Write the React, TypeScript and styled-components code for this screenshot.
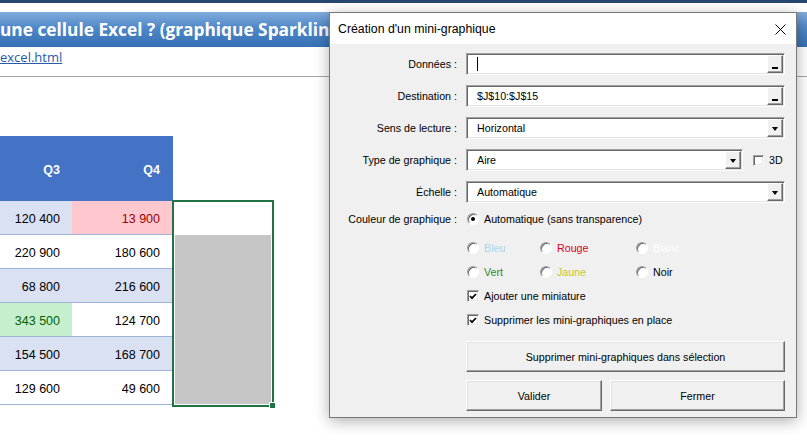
import React from "react";
import styled, { createGlobalStyle } from "styled-components";

const GlobalStyle = createGlobalStyle`
  html, body {
    margin: 0;
    padding: 0;
    background: #fff;
  }
  body {
    font-family: "Liberation Sans", Arial, sans-serif;
  }
`;

const Page = styled.div`
  position: relative;
  width: 807px;
  height: 443px;
  overflow: hidden;
  background: #fff;
`;

const TopStrip = styled.div`
  height: 3px;
  background: #26466d;
  margin-bottom: 9px;
`;

const Banner = styled.div`
  height: 35px;
  background: linear-gradient(to bottom, #82abdc 0%, #4f88c8 45%, #3570b4 100%);
  color: #fff;
  font-family: "Open Sans", sans-serif;
  font-weight: 700;
  font-size: 17.3px;
  line-height: 35px;
  white-space: nowrap;
  overflow: hidden;
`;

const LinkRow = styled.div`
  height: 29px;
`;

const PageLink = styled.a`
  display: inline-block;
  font-family: "Open Sans", sans-serif;
  font-size: 13px;
  line-height: 20px;
  color: #2a5ba8;
  text-decoration: underline;
`;

const Divider = styled.div`
  height: 1px;
  background: #a6a6a6;
`;

const Sheet = styled.div`
  margin-top: 59px;
  display: grid;
  grid-template-columns: 72px 101px 102px;
  grid-template-rows: 65px repeat(6, 34px);
  font-family: "Liberation Sans", Arial, sans-serif;
  font-size: 12.5px;
`;

const HeadCell = styled.div<{ $pad: number }>`
  background: #4472c4;
  color: #fff;
  font-weight: 700;
  display: flex;
  align-items: center;
  justify-content: flex-end;
  padding: 2px ${(p) => p.$pad}px 0 0;
`;

type Tone = "band" | "plain" | "bad" | "good";

const toneBg: Record<Tone, string> = {
  band: "#d9e1f2",
  plain: "#fff",
  bad: "#ffc7ce",
  good: "#c6efce",
};
const toneFg: Record<Tone, string> = {
  band: "#000",
  plain: "#000",
  bad: "#9c0006",
  good: "#006100",
};

const Cell = styled.div<{ $tone: Tone; $pad: number }>`
  box-sizing: border-box;
  background: ${(p) => toneBg[p.$tone]};
  color: ${(p) => toneFg[p.$tone]};
  border-bottom: 1px solid #9fb3d8;
  display: flex;
  align-items: center;
  justify-content: flex-end;
  padding: 3px ${(p) => p.$pad}px 0 0;
`;

const SparkCell = styled.div`
  grid-column: 3;
  grid-row: 2 / span 6;
  align-self: start;
  margin-left: -1px;
  margin-top: -1px;
  box-sizing: border-box;
  width: 102px;
  height: 207px;
  border: 2px solid #217346;
  padding: 1px;
  display: flex;
  flex-direction: column;
  position: relative;
`;

const SparkTop = styled.div`
  height: 32px;
  background: #fff;
`;

const SparkArea = styled.div`
  flex: 1;
  background: #c6c6c6;
`;

const Handle = styled.span`
  position: absolute;
  right: -4px;
  bottom: -4px;
  width: 5px;
  height: 5px;
  background: #217346;
  border: 1px solid #fff;
`;

/* ---------- dialog ---------- */

const Dialog = styled.div`
  position: absolute;
  left: 329px;
  top: 12px;
  width: 468px;
  height: 406px;
  box-sizing: border-box;
  border: 1px solid #777;
  background: #f0f0f0;
  box-shadow: 0 3px 14px rgba(0, 0, 0, 0.32);
  display: flex;
  flex-direction: column;
  font-family: "Liberation Sans", Arial, sans-serif;
  font-size: 10.7px;
  color: #000;
`;

const TitleBar = styled.div`
  height: 30px;
  background: #fff;
  display: flex;
  align-items: center;
  justify-content: space-between;
  padding: 1px 10px 0 8px;
  font-size: 12.3px;
`;

const CloseIcon = styled.svg`
  width: 11px;
  height: 11px;
`;

const Body = styled.div`
  padding: 9px 11px 0 0;
`;

const FormGrid = styled.div`
  display: grid;
  grid-template-columns: 127px 319px;
  grid-auto-rows: 22px;
  column-gap: 9px;
  row-gap: 10px;
`;

const Label = styled.div`
  text-align: right;
  align-self: center;
  white-space: nowrap;
`;

const FieldLine = styled.div`
  display: flex;
  align-items: center;
  gap: 9px;
`;

const Field = styled.div<{ $width?: number }>`
  box-sizing: border-box;
  height: 22px;
  width: ${(p) => (p.$width ? `${p.$width}px` : "100%")};
  background: #fff;
  border: 1px solid;
  border-color: #a0a0a0 #fff #fff #a0a0a0;
  box-shadow: inset 1px 1px #696969, inset -1px -1px #e3e3e3;
  display: flex;
  align-items: center;
  padding-left: 10px;
  white-space: nowrap;
`;

const FieldText = styled.span`
  flex: 1;
  padding-bottom: 1px;
`;

const Caret = styled.span`
  display: inline-block;
  width: 1px;
  height: 14px;
  background: #000;
  vertical-align: middle;
`;

const MiniButton = styled.span`
  box-sizing: border-box;
  width: 16px;
  height: 18px;
  margin-right: 1px;
  background: #f0f0f0;
  border: 1px solid;
  border-color: #fff #696969 #696969 #fff;
  box-shadow: inset -1px -1px #a0a0a0;
  display: flex;
  align-items: center;
  justify-content: center;
`;

const Underscore = styled.span`
  width: 6px;
  height: 2px;
  background: #000;
  margin-top: 8px;
`;

const Arrow = styled.span`
  width: 0;
  height: 0;
  border-left: 3.5px solid transparent;
  border-right: 3.5px solid transparent;
  border-top: 4px solid #000;
  margin-top: 1px;
`;

const Box = styled.span<{ $size: number }>`
  box-sizing: border-box;
  width: ${(p) => p.$size}px;
  height: ${(p) => p.$size}px;
  flex: none;
  background: #fff;
  border: 1px solid;
  border-color: #a0a0a0 #fff #fff #a0a0a0;
  box-shadow: inset 1px 1px #696969, inset -1px -1px #e3e3e3;
  display: flex;
  align-items: center;
  justify-content: center;
`;

const Round = styled.span`
  box-sizing: border-box;
  width: 12px;
  height: 12px;
  flex: none;
  border-radius: 50%;
  background: #fff;
  border: 1px solid;
  border-color: #a0a0a0 #fff #fff #a0a0a0;
  box-shadow: inset 1px 1px #696969;
  display: flex;
  align-items: center;
  justify-content: center;
`;

const Dot = styled.span`
  width: 4px;
  height: 4px;
  border-radius: 50%;
  background: #000;
`;

const ColorSection = styled.div`
  display: grid;
  grid-template-columns: 127px 319px;
  column-gap: 9px;
  margin-top: 4px;
`;

const ColorLabel = styled.div`
  text-align: right;
  line-height: 24px;
  white-space: nowrap;
`;

const Options = styled.div`
  display: flex;
  flex-direction: column;
`;

const Option = styled.label<{ $color?: string }>`
  height: 24px;
  display: flex;
  align-items: center;
  gap: 5px;
  padding-left: 1px;
  color: ${(p) => p.$color || "#000"};
  white-space: nowrap;
`;

const RadioGrid = styled.div`
  display: grid;
  grid-template-columns: 73px 96px 1fr;
  margin-top: 5px;
`;

const Actions = styled.div`
  margin: 9px 0 0 136px;
  display: flex;
  flex-direction: column;
  gap: 8px;
`;

const ButtonRow = styled.div`
  display: flex;
  gap: 8px;
`;

const Button = styled.button<{ $width?: number }>`
  box-sizing: border-box;
  height: 31px;
  width: ${(p) => (p.$width ? `${p.$width}px` : "100%")};
  flex: none;
  background: #f0f0f0;
  border: 1px solid;
  border-color: #fff #696969 #696969 #fff;
  box-shadow: inset -1px -1px #a0a0a0, inset 1px 1px #e3e3e3;
  font-family: "Liberation Sans", Arial, sans-serif;
  font-size: 10.7px;
  color: #000;
  padding: 0;
`;

const Check = () => (
  <svg width="8" height="7" viewBox="0 0 8 7">
    <polyline points="1,3 3,5.2 7,1" fill="none" stroke="#000" strokeWidth="1.7" />
  </svg>
);

const rows: [string, string, Tone, Tone][] = [
  ["120 400", "13 900", "band", "bad"],
  ["220 900", "180 600", "plain", "plain"],
  ["68 800", "216 600", "band", "band"],
  ["343 500", "124 700", "good", "plain"],
  ["154 500", "168 700", "band", "band"],
  ["129 600", "49 600", "plain", "plain"],
];

const colours = [
  { label: "Bleu", color: "#a7d6ea" },
  { label: "Rouge", color: "#e0001a" },
  { label: "Blanc", color: "#fff" },
  { label: "Vert", color: "#2f8a2f" },
  { label: "Jaune", color: "#c8c828" },
  { label: "Noir", color: "#000" },
];

const App = () => {
  return (
    <Page>
      <GlobalStyle />
      <TopStrip />
      <Banner>une cellule Excel ? (graphique Sparkline)</Banner>
      <LinkRow>
        <PageLink>excel.html</PageLink>
      </LinkRow>
      <Divider />

      <Sheet>
        <HeadCell $pad={12}>Q3</HeadCell>
        <HeadCell $pad={13}>Q4</HeadCell>
        <div />
        {rows.map(([q3, q4, t3, t4]) => (
          <React.Fragment key={q3}>
            <Cell $tone={t3} $pad={12}>{q3}</Cell>
            <Cell $tone={t4} $pad={13}>{q4}</Cell>
          </React.Fragment>
        ))}
        <SparkCell>
          <SparkTop />
          <SparkArea />
          <Handle />
        </SparkCell>
      </Sheet>

      <Dialog>
        <TitleBar>
          <span>Création d'un mini-graphique</span>
          <CloseIcon viewBox="0 0 11 11">
            <path d="M0.5 0.5 L10.5 10.5 M10.5 0.5 L0.5 10.5" stroke="#000" strokeWidth="1" />
          </CloseIcon>
        </TitleBar>
        <Body>
          <FormGrid>
            <Label>Données :</Label>
            <Field>
              <FieldText>
                <Caret />
              </FieldText>
              <MiniButton>
                <Underscore />
              </MiniButton>
            </Field>

            <Label>Destination :</Label>
            <Field>
              <FieldText>$J$10:$J$15</FieldText>
              <MiniButton>
                <Underscore />
              </MiniButton>
            </Field>

            <Label>Sens de lecture :</Label>
            <Field>
              <FieldText>Horizontal</FieldText>
              <MiniButton>
                <Arrow />
              </MiniButton>
            </Field>

            <Label>Type de graphique :</Label>
            <FieldLine>
              <Field $width={277}>
                <FieldText>Aire</FieldText>
                <MiniButton>
                  <Arrow />
                </MiniButton>
              </Field>
              <Option>
                <Box $size={11} />
                3D
              </Option>
            </FieldLine>

            <Label>Échelle :</Label>
            <Field>
              <FieldText>Automatique</FieldText>
              <MiniButton>
                <Arrow />
              </MiniButton>
            </Field>
          </FormGrid>

          <ColorSection>
            <ColorLabel>Couleur de graphique :</ColorLabel>
            <Options>
              <Option>
                <Round>
                  <Dot />
                </Round>
                Automatique (sans transparence)
              </Option>
              <RadioGrid>
                {colours.map((c) => (
                  <Option key={c.label} $color={c.color}>
                    <Round />
                    {c.label}
                  </Option>
                ))}
              </RadioGrid>
              <Option>
                <Box $size={12}>
                  <Check />
                </Box>
                Ajouter une miniature
              </Option>
              <Option>
                <Box $size={12}>
                  <Check />
                </Box>
                Supprimer les mini-graphiques en place
              </Option>
            </Options>
          </ColorSection>

          <Actions>
            <Button>Supprimer mini-graphiques dans sélection</Button>
            <ButtonRow>
              <Button $width={136}>Valider</Button>
              <Button $width={175}>Fermer</Button>
            </ButtonRow>
          </Actions>
        </Body>
      </Dialog>
    </Page>
  );
};

export default App;
